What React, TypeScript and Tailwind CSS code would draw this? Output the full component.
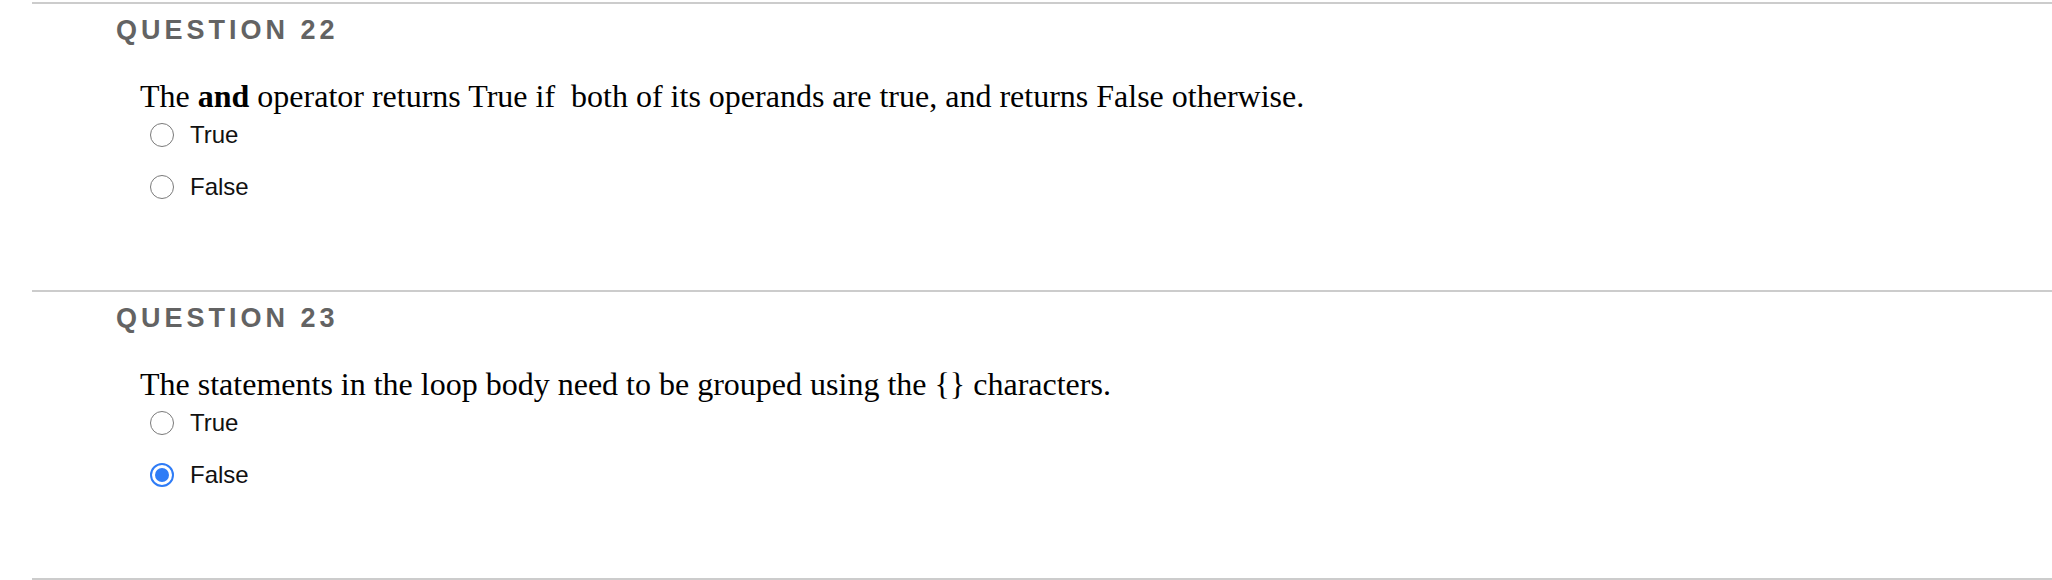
const questions = [
  {
    num: 22,
    text: (
      <>
        The <b>and</b> operator returns True if{"\u00a0"} both of its operands are true, and returns False otherwise.
      </>
    ),
    answer: null as string | null,
  },
  {
    num: 23,
    text: <>The statements in the loop body need to be grouped using the {"{}"} characters.</>,
    answer: "False",
  },
];

const Radio = ({ checked }: { checked: boolean }) =>
  checked ? (
    <span className="flex h-6 w-6 items-center justify-center rounded-full border-[2.5px] border-[#2f7cf6] bg-white">
      <span className="h-[14px] w-[14px] rounded-full bg-[#2f7cf6]" />
    </span>
  ) : (
    <span className="h-6 w-6 rounded-full border-[1.5px] border-[#7a7a7a] bg-white" />
  );

const Question = ({ num, text, answer }: (typeof questions)[number]) => {
  return (
    <section className="h-[288px] border-t-2 border-[#cccccc]">
      <h2 className="ml-[84px] mt-[11px] font-['Liberation_Sans',Arial,sans-serif] text-[27px] leading-[30px] font-bold tracking-[4px] text-[#636363]">
        QUESTION {num}
      </h2>
      <p className="ml-[108px] mt-[33px] font-['Liberation_Serif','Times_New_Roman',serif] text-[32px] leading-[36px] text-black">
        {text}
      </p>
      <div className="ml-[118px] mt-[3px] flex flex-col gap-4">
        {["True", "False"].map((opt) => (
          <label key={opt} className="flex h-9 items-center">
            <Radio checked={answer === opt} />
            <span className="ml-[16px] font-['Liberation_Sans',Arial,sans-serif] text-[24px] leading-9 text-[#111111]">{opt}</span>
          </label>
        ))}
      </div>
    </section>
  );
};

export default function App() {
  return (
    <div className="min-h-[580px] w-[2052px] bg-white pt-[2px] pl-8">
      {questions.map((q) => (
        <Question key={q.num} {...q} />
      ))}
      <div className="border-t-2 border-[#cccccc]" />
    </div>
  );
}
